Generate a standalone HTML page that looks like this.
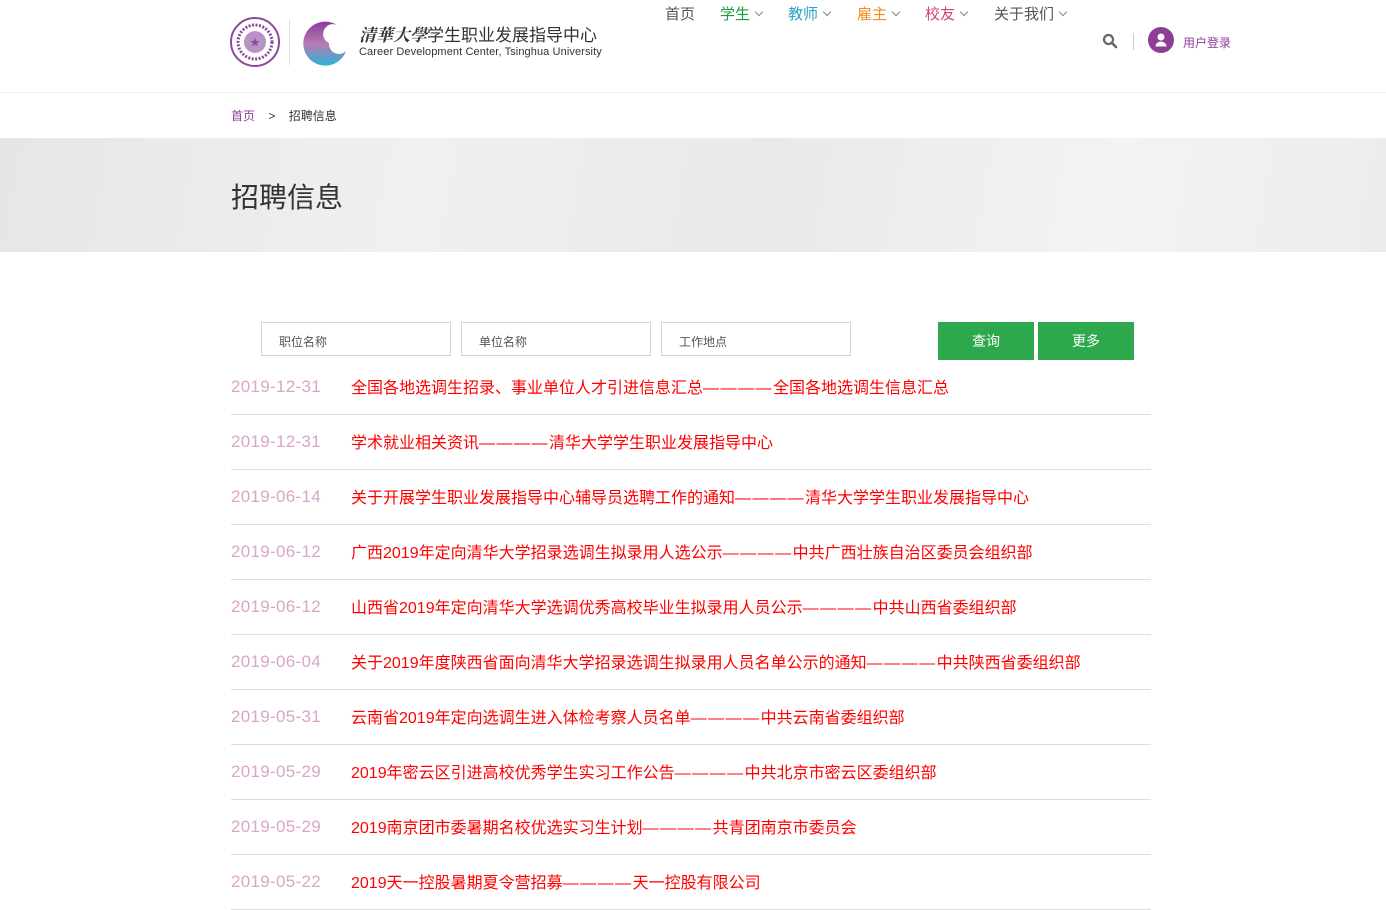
<!DOCTYPE html>
<html><head><meta charset="utf-8"><style>
*{margin:0;padding:0;box-sizing:border-box}
body{width:1386px;height:903px;overflow:hidden;background:#fff;font-family:"Liberation Sans","Noto Sans CJK SC",sans-serif;position:relative}
.a{position:absolute}
.nav span{position:absolute;top:3px;font-size:15px;white-space:nowrap}
.chev{display:inline-block;width:6px;height:6px;border-right:1.3px solid #888;border-bottom:1.3px solid #888;transform:rotate(45deg);margin-left:6px;position:relative;top:-4px}
.inp{position:absolute;top:322px;width:190px;height:34px;border:1px solid #d4d4d4;font-size:12px;color:#555;padding:10px 0 0 17px}
.btn{position:absolute;top:322px;width:96px;height:38px;background:#2ea84c;color:#fff;font-size:14px;text-align:center;line-height:38px}
.row{position:absolute;left:231px;width:920px;height:55px;border-bottom:1px solid #ddd}
.row .d{position:absolute;left:0;top:17px;font-size:17px;color:#d9a6c8;letter-spacing:0.3px}
.row .t{position:absolute;left:120px;top:14px;font-size:16px;color:#f00;white-space:nowrap}
.row .t b{font-weight:normal;letter-spacing:1.5px}
</style></head><body>
<svg class="a" style="left:230px;top:17px" width="52" height="50" viewBox="0 0 52 50"><circle cx="25" cy="25" r="24" fill="none" stroke="#8a4a9c" stroke-width="2"/><circle cx="25" cy="25" r="17" fill="none" stroke="#8a4a9c" stroke-width="3" stroke-dasharray="2 1.5"/><circle cx="25" cy="25" r="11" fill="#b993c6"/><text x="25" y="29" font-size="10" text-anchor="middle" fill="#8a4a9c">★</text></svg>
<div class="a" style="left:289px;top:20px;width:1px;height:45px;background:#ddd"></div>
<svg class="a" style="left:299px;top:17px" width="50" height="50" viewBox="0 0 50 50"><defs><linearGradient id="g" x1="0" y1="0" x2="0" y2="1"><stop offset="0" stop-color="#8a3c9c"/><stop offset=".5" stop-color="#b87ab5"/><stop offset="1" stop-color="#27b6d2"/></linearGradient></defs><path d="M38 8 A22 22 0 1 0 47 34 A10 10 0 0 1 30 26 A8 8 0 0 1 38 8Z" fill="url(#g)"/></svg>
<div class="a" style="left:359px;top:24px;font-size:17px;line-height:20px;color:#333;white-space:nowrap;font-family:'Noto Serif CJK SC',serif"><span style="font-style:italic;font-weight:bold">清華大學</span><span style="font-family:'Noto Sans CJK SC',sans-serif">学生职业发展指导中心</span></div>
<div class="a" style="left:359px;top:46px;font-size:11px;color:#333;white-space:nowrap;letter-spacing:0.1px">Career Development Center, Tsinghua University</div>
<div class="nav">
<span style="left:665px;color:#555">首页</span>
<span style="left:720px;color:#1a9e3c">学生<i class="chev"></i></span>
<span style="left:788px;color:#2aa0c8">教师<i class="chev"></i></span>
<span style="left:857px;color:#f68a1e">雇主<i class="chev"></i></span>
<span style="left:925px;color:#d5407a">校友<i class="chev"></i></span>
<span style="left:994px;color:#555">关于我们<i class="chev"></i></span>
</div>
<svg class="a" style="left:1102px;top:33px" width="16" height="16" viewBox="0 0 16 16"><circle cx="6.5" cy="6.5" r="4.5" fill="none" stroke="#666" stroke-width="2.2"/><path d="M10 10l4 4" stroke="#666" stroke-width="2.6" stroke-linecap="round"/></svg>
<div class="a" style="left:1133px;top:33px;width:1px;height:17px;background:#ccc"></div>
<svg class="a" style="left:1148px;top:27px" width="26" height="26" viewBox="0 0 26 26"><circle cx="13" cy="13" r="13" fill="#8d3d98"/><circle cx="13" cy="10" r="3.5" fill="#fff"/><path d="M7.5 19.5a5.5 5 0 0 1 11 0z" fill="#fff"/></svg>
<div class="a" style="left:1183px;top:34px;font-size:12px;color:#8d3d98">用户登录</div>
<div class="a" style="left:0;top:92px;width:1386px;height:1px;background:#eee"></div>
<div class="a" style="left:231px;top:107px;font-size:12px;color:#333;white-space:nowrap"><span style="color:#8d3d98">首页</span>&nbsp;&nbsp;&nbsp;&nbsp;&gt;&nbsp;&nbsp;&nbsp;&nbsp;招聘信息</div>
<div class="a" style="left:0;top:138px;width:1386px;height:114px;background:linear-gradient(100deg,#e6e6e6 0%,#f0f0f0 30%,#e9e9e9 55%,#f3f3f3 80%,#ececec 100%)"></div>
<div class="a" style="left:231px;top:176px;font-size:28px;color:#333">招聘信息</div>
<div class="inp" style="left:261px">职位名称</div>
<div class="inp" style="left:461px">单位名称</div>
<div class="inp" style="left:661px">工作地点</div>
<div class="btn" style="left:938px">查询</div>
<div class="btn" style="left:1038px">更多</div>
<div class="row" style="top:360px"><span class="d">2019-12-31</span><span class="t">全国各地选调生招录、事业单位人才引进信息汇总<b>————</b>全国各地选调生信息汇总</span></div>
<div class="row" style="top:415px"><span class="d">2019-12-31</span><span class="t">学术就业相关资讯<b>————</b>清华大学学生职业发展指导中心</span></div>
<div class="row" style="top:470px"><span class="d">2019-06-14</span><span class="t">关于开展学生职业发展指导中心辅导员选聘工作的通知<b>————</b>清华大学学生职业发展指导中心</span></div>
<div class="row" style="top:525px"><span class="d">2019-06-12</span><span class="t">广西2019年定向清华大学招录选调生拟录用人选公示<b>————</b>中共广西壮族自治区委员会组织部</span></div>
<div class="row" style="top:580px"><span class="d">2019-06-12</span><span class="t">山西省2019年定向清华大学选调优秀高校毕业生拟录用人员公示<b>————</b>中共山西省委组织部</span></div>
<div class="row" style="top:635px"><span class="d">2019-06-04</span><span class="t">关于2019年度陕西省面向清华大学招录选调生拟录用人员名单公示的通知<b>————</b>中共陕西省委组织部</span></div>
<div class="row" style="top:690px"><span class="d">2019-05-31</span><span class="t">云南省2019年定向选调生进入体检考察人员名单<b>————</b>中共云南省委组织部</span></div>
<div class="row" style="top:745px"><span class="d">2019-05-29</span><span class="t">2019年密云区引进高校优秀学生实习工作公告<b>————</b>中共北京市密云区委组织部</span></div>
<div class="row" style="top:800px"><span class="d">2019-05-29</span><span class="t">2019南京团市委暑期名校优选实习生计划<b>————</b>共青团南京市委员会</span></div>
<div class="row" style="top:855px"><span class="d">2019-05-22</span><span class="t">2019天一控股暑期夏令营招募<b>————</b>天一控股有限公司</span></div>
</body></html>
